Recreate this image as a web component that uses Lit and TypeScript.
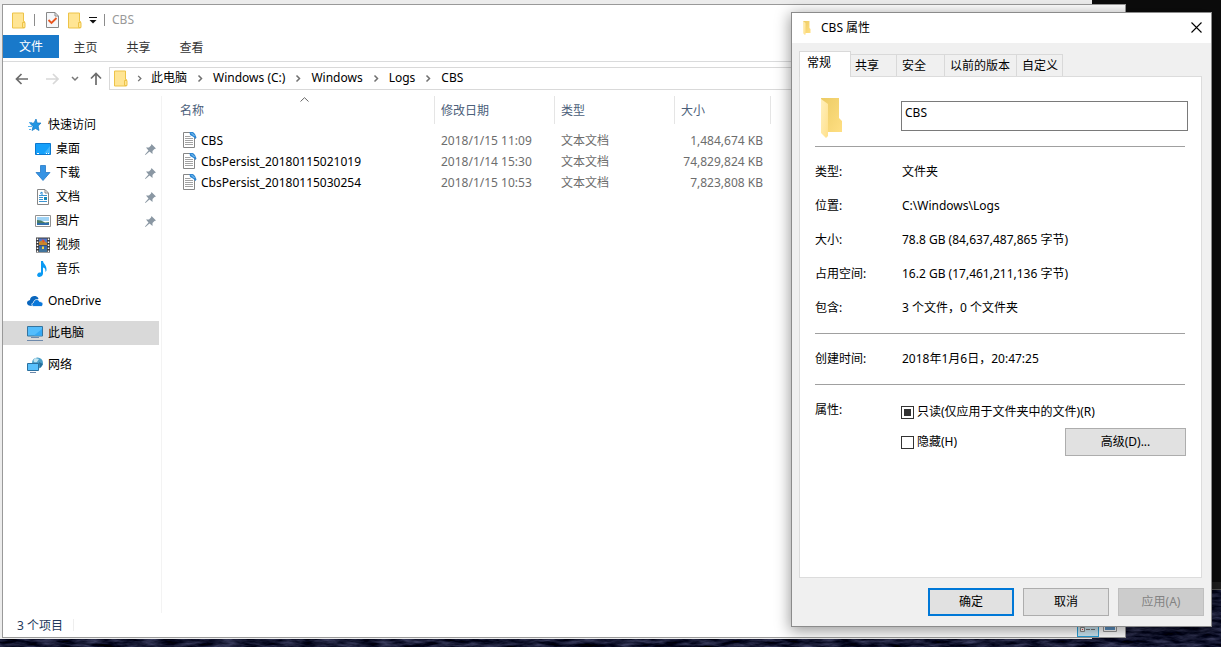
import { LitElement, html, css, svg } from "lit";
import { customElement, state } from "lit/decorators.js";

const smallFolder = html`<svg width="14" height="17" viewBox="0 0 14 17" aria-hidden="true">
  <path d="M.5 1H11.5V9.500H12.500V16H.5Z" fill="#ffe594" stroke="#edc348" />
  <path d="M10.500 15.500V10.500H13V15.500Z" fill="#ffe594" stroke="#edc348" />
</svg>`;

const bigFolder = (w: number, h: number) => html`<svg width=${w} height=${h} viewBox="0 0 22 40" aria-hidden="true">
  <defs>
    <linearGradient id="back" x1="0" x2="1" y2="1"><stop offset="0" stop-color="#eccb64" /><stop offset="1" stop-color="#ffdf83" /></linearGradient>
    <linearGradient id="front" y2="1"><stop offset="0" stop-color="#fff0bd" /><stop offset="1" stop-color="#ffe08b" /></linearGradient>
  </defs>
  <path d="M0 0H18V20L21 23V34H3Z" fill="url(#back)" />
  <path d="M0 1L7 6V38L5 40L0 35Z" fill="url(#front)" />
</svg>`;

const chevron = html`<svg class="chev" viewBox="0 0 26 9" aria-hidden="true">
  <path d="M11.500 1.500L14.500 4.500L11.500 7.500" fill="none" stroke="#707070" stroke-width="1.500" />
</svg>`;

const pin = html`<svg class="pin" width="11" height="11" viewBox="0 0 11 11" aria-hidden="true">
  <path d="M6.500 0L11 4.500L9.500 5L7.500 7L7.500 10L4.500 7.500L.5 11L0 10.500L3.500 6.500L1 3.500H4L6 1.500Z" fill="#8a97a3" />
</svg>`;

const textFile = html`<svg width="14" height="17" viewBox="0 0 14 17" aria-hidden="true">
  <path d="M.5 .5H9.500L11.500 4V15.500H.5Z" fill="#fff" stroke="#868686" />
  <path d="M2 4.500H7.500M2 6.500H10M2 8.500H10M2 10.500H10M2 12.500H10" stroke="#a2a2a2" />
  <path d="M6.500 0H10L12 2L13.500 5.500L12.500 7L10.500 5L7 3Z" fill="#2f88d4" />
  <path d="M8.500 1L11.500 4" stroke="#8fd0f8" />
</svg>`;

const icons: Record<string, unknown> = {
  star: svg`<path d="M9 2L10.200 6H14L11.200 9L12 13.500L8.500 11.500L5 13.500L6 9.500L3 6.500L7 6Z" fill="#2196e3" stroke="#1079c4" stroke-width=".7"/><path d="M2 5.500H5M1 9.500H5M2 12.500H4" stroke="#58b3ee"/>`,
  desktop: svg`<path d="M.5 2.500H15.500V13.500H.5Z" fill="#15a0fa" stroke="#0b78cf"/><path d="M9 12.500L15 5V12.500Z" fill="#41b5fc"/><path d="M2 12.500H4M11 12.500H12M13 12.500H14" stroke="#fff"/>`,
  download: svg`<path d="M5.500 .5H10.500V7.500H15L8 15.500L1 7.500H5.500Z" fill="#3593e4" stroke="#2579c6" stroke-width=".8"/>`,
  document: svg`<path d="M2.500 .5H10L13.500 4V15.500H2.500Z" fill="#fff" stroke="#868686"/><path d="M10 1V4H13" fill="none" stroke="#868686"/><path d="M4 6.500H12M4 8.500H8M4 10.500H8M4 12.500H12" stroke="#3b94d2"/><path d="M9 8H12V11H9Z" fill="#1687b9"/><path d="M5 4.500L7 3M7 3V6" stroke="#2189d8"/>`,
  picture: svg`<path d="M.5 2.500H15.500V13.500H.5Z" fill="#fff" stroke="#929292"/><path d="M2 4H14V8H2Z" fill="#9fd3f5"/><path d="M2 7L6 7.500L10 9.500L14 9V10H2Z" fill="#497b67"/><path d="M2 10H14V12H2Z" fill="#2e6dab"/>`,
  video: svg`<path d="M1 .5H15V15.500H1Z" fill="#3a3a3d"/><path d="M4 1.500H12V8H4Z" fill="#5377c9"/><path d="M4 8.500H12V15H4Z" fill="#3467b1"/><path d="M4 5L8 3L12 6V8H4Z" fill="#c9862c"/><path d="M7 2L10 4L8 6Z" fill="#e14e33"/><path d="M4 12L7 10L9 13L12 11V15H4Z" fill="#42749c"/><path d="M7 9.500H9V12H7Z" fill="#efd34d"/><path d="M2.500 1.500V15M13.500 1.500V15" stroke="#fff" stroke-width="1.500" stroke-dasharray="1.500 1.500"/>`,
  music: svg`<path d="M6 0H8C8.500 3.500 12 4 11.500 9.500L10.500 11C10.500 8 10 7 8 6.500V12.500C8 15 5.500 16 4 16C1.500 16 1.500 12 4.500 11.500L6 11.500Z" fill="#0b9af3"/>`,
  cloud: svg`<path d="M5 13C2 13 0 12 0 10C0 8 1.500 7.500 3 7C3 4 6 2.500 8.500 3C10 3.500 11 4.500 11.500 5.500" fill="#0a66bd"/><path d="M7 13.500C4.500 13.500 4 10.500 6.500 9.500C7 6 11.500 5.500 12.500 8.500C15 8.500 16 10 16 11C16 12.500 15 13.500 14 13.500Z" fill="#0a78da" stroke="#fff" stroke-width=".8"/>`,
  pc: svg`<path d="M.5 1.500H15.500V11H.5Z" fill="#54bdfc" stroke="#35749e"/><path d="M7 10.500L15 4V10.500Z" fill="#35a9f5"/><path d="M4 12.500H12M0 15.500H16" stroke="#6d89ab"/>`,
  network: svg`<circle cx="10.500" cy="6" r="5.500" fill="#4b9fc8"/><path d="M8 1C5 4 7 6 10 5L12 2Z" fill="#bfe4f1"/><path d="M12 5L16 7L13 11Z" fill="#266f9b"/><path d="M.5 6.500H11.500V13.500H.5Z" fill="#59c0fb" stroke="#2b709f"/><path d="M3 15.500H9" stroke="#6d89ab"/>`,
};

const icon = (name: string) => html`<svg class="ico" width="16" height="16" viewBox="0 0 16 16" aria-hidden="true">${icons[name]}</svg>`;

const sharedText = css`
  :host { box-sizing: border-box; font-family: "Noto Sans", "Noto Sans CJK SC", sans-serif; font-size: 12px; line-height: 16px; color: #000; }
  * { box-sizing: border-box; }
  svg { display: block; flex: none; }
  button, input { font: inherit; color: inherit; }
  button { padding: 0; }
  a { color: inherit; text-decoration: none; }
`;

@customElement("explorer-window")
class ExplorerWindow extends LitElement {
  static styles = [sharedText, css`
    :host { display: flex; flex-direction: column; background: #fff; border: 1px solid #999; }
    .title { display: flex; align-items: center; height: 30px; padding-left: 9px; color: #999; }
    .bar { width: 1px; height: 12px; background: #8c8c8c; }
    .title .bar:nth-of-type(1) { margin: 0 11px 0 8px; }
    .title .check { margin-right: 9px; }
    .title .more { margin: 0 7px; }
    .title .name { margin-left: 7px; }
    .ribbon { display: flex; height: 27px; border-bottom: 1px solid #dadbdc; }
    .ribbon button { height: 23px; border: 0; background: none; color: #333; width: 53px; padding-top: 2px; }
    .ribbon .file { width: 56px; background: #1979ca; color: #fff; padding-top: 0; }
    .address { display: flex; align-items: center; height: 34px; padding-bottom: 1px; }
    .nav { display: flex; align-items: center; width: 106px; flex: none; padding-left: 12px; }
    .nav button { border: 0; background: none; }
    .nav button:nth-child(2) { margin-left: 17px; }
    .nav button:nth-child(3) { margin-left: 12px; }
    .nav button:nth-child(4) { margin-left: 11px; }
    .path { flex: 1; display: flex; align-items: center; height: 23px; border: 1px solid #d9d9d9; padding-left: 4px; white-space: nowrap; }
    .path span { padding-bottom: 1px; }
    .chev { width: 26px; height: 9px; }
    .chev:nth-child(2) { width: 23px; }
    .body { flex: 1; display: flex; min-height: 0; }
    .tree { width: 159px; flex: none; padding-top: 17px; border-right: 1px solid #f3f3f3; }
    .tree a { display: flex; align-items: center; height: 24px; padding-left: 24px; margin-right: 2px; gap: 5px; }
    .tree a.sub { padding: 0 3px 0 32px; }
    .tree a.gap { margin-top: 8px; }
    .tree a.on { background: #d9d9d9; }
    .pin { margin-left: auto; }
    .list { flex: 1; }
    table { border-collapse: separate; border-spacing: 0; table-layout: fixed; width: 609px; }
    th { position: relative; height: 28px; padding: 2px 6px 0; text-align: left; font-weight: 400; color: #4c607a; border-right: 1px solid #e5e5e5; }
    th:first-child { padding-left: 18px; }
    th svg { position: absolute; left: 138px; top: 1px; }
    .c1 { width: 273px; } .c2 { width: 120px; } .c4 { width: 96px; }
    td { height: 21px; padding: 0 6px; color: #6d6d6d; white-space: nowrap; }
    td:first-child { color: #000; padding-left: 21px; }
    td:last-child { text-align: right; padding-right: 8px; }
    .file-name { display: flex; align-items: center; gap: 4px; }
    tbody::before { content: ""; display: block; height: 6px; }
    .status { display: flex; align-items: center; height: 24px; padding-left: 14px; color: #1e395b; flex: none; }
    .status span { padding-top: 1px; }
    .status i { width: 1px; height: 12px; margin-left: 10px; background: #eee; }
    .views { margin-left: auto; display: flex; height: 24px; }
    .views button { border: 0; background: none; width: 22px; display: grid; place-items: center; }
    .views .sel { border: 1px solid #26a0da; background: #cce8f4; }
    .views button:last-child { margin-right: 4px; }
  `];

  private files = [
    ["CBS", "2018/1/15 11:09", "1,484,674 KB"],
    ["CbsPersist_20180115021019", "2018/1/14 15:30", "74,829,824 KB"],
    ["CbsPersist_20180115030254", "2018/1/15 10:53", "7,823,808 KB"],
  ];

  private tree = [
    ["star", "快速访问", ""], ["desktop", "桌面", "sub pinned"], ["download", "下载", "sub pinned"],
    ["document", "文档", "sub pinned"], ["picture", "图片", "sub pinned"], ["video", "视频", "sub"],
    ["music", "音乐", "sub"], ["cloud", "OneDrive", "gap"], ["pc", "此电脑", "gap on"], ["network", "网络", "gap"],
  ];

  render() {
    const path = ["此电脑", "Windows (C:)", "Windows", "Logs", "CBS"];
    return html`
      <div class="title">
        ${smallFolder}<span class="bar"></span>
        <svg class="check" width="13" height="16" viewBox="0 0 13 16"><path d="M.5 .5H9L12.500 4V15.500H.5Z" fill="#f5f7fa" stroke="#888"/><path d="M9 .5V4H12" fill="none" stroke="#888"/><path d="M2.500 8L5.500 11L10.500 6" fill="none" stroke="#e8561f" stroke-width="1.800"/></svg>
        ${smallFolder}
        <svg class="more" width="8" height="8" viewBox="0 0 8 8"><path d="M0 1.500H8" stroke="#111"/><path d="M.5 4H7.500L4 7.500Z" fill="#111"/></svg>
        <span class="bar"></span><span class="name">CBS</span>
      </div>
      <div class="ribbon"><button class="file">文件</button><button>主页</button><button>共享</button><button>查看</button></div>
      <div class="address">
        <div class="nav">
          <button aria-label="后退"><svg width="14" height="12" viewBox="0 0 14 12"><path d="M13 6H1.500M6.500 1L1.500 6L6.500 11" fill="none" stroke="#6c6c6c" stroke-width="1.700"/></svg></button>
          <button aria-label="前进"><svg width="13" height="12" viewBox="0 0 13 12"><path d="M0 6H11.500M7 1L12 6L7 11" fill="none" stroke="#d8d8d8" stroke-width="1.700"/></svg></button>
          <button aria-label="最近位置"><svg width="8" height="6" viewBox="0 0 8 6"><path d="M1 1L4 4L7 1" fill="none" stroke="#777" stroke-width="1.500"/></svg></button>
          <button aria-label="上移"><svg width="12" height="13" viewBox="0 0 12 13"><path d="M6 13V1.500M1 6.500L6 1.500L11 6.500" fill="none" stroke="#6c6c6c" stroke-width="1.700"/></svg></button>
        </div>
        <div class="path">${smallFolder}${path.map((p) => html`${chevron}<span>${p}</span>`)}</div>
      </div>
      <div class="body">
        <nav class="tree">
          ${this.tree.map(([name, label, cls]) => html`<a href="#" class=${cls}>${icon(name)}<span>${label}</span>${cls.includes("pinned") ? pin : ""}</a>`)}
        </nav>
        <div class="list">
          <table>
            <thead><tr>
              <th class="c1">名称<svg width="9" height="5" viewBox="0 0 9 5"><path d="M.5 4.500L4.500 .7L8.500 4.500" fill="none" stroke="#666"/></svg></th>
              <th class="c2">修改日期</th><th class="c2">类型</th><th class="c4">大小</th>
            </tr></thead>
            <tbody>
              ${this.files.map(([n, d, s]) => html`<tr><td><div class="file-name">${textFile}<span>${n}</span></div></td><td>${d}</td><td>文本文档</td><td>${s}</td></tr>`)}
            </tbody>
          </table>
        </div>
      </div>
      <div class="status"><span>3 个项目</span><i></i>
        <div class="views">
          <button class="sel" aria-label="详细信息"><svg width="16" height="18" viewBox="0 0 16 18"><path d="M.5 1.500H3.500V5.500H.5ZM.5 11.500H4.500V15.500H.5Z" fill="#fff" stroke="#888"/><path d="M2 13.500H3" stroke="#d33"/><path d="M6 3.500H10M11 3.500H15M6 13.500H10M11 13.500H15" stroke="#777"/></svg></button>
          <button aria-label="大图标"><svg width="14" height="14" viewBox="0 0 14 14"><path d="M.5 .5H13.500V13.500H.5Z" fill="#fff" stroke="#999"/><path d="M2 8H12V12H2Z" fill="#5a8fc0"/></svg></button>
        </div>
      </div>`;
  }
}

@customElement("properties-dialog")
class PropertiesDialog extends LitElement {
  @state() private hiddenAttr = false;

  static styles = [sharedText, css`
    :host { display: flex; flex-direction: column; background: #f0f0f0; border: 1px solid #8b8b8b; box-shadow: 0 3px 14px 1px rgba(0, 0, 0, 0.4); }
    header { display: flex; align-items: center; height: 30px; padding: 0 9px 1px 10px; background: #fff; }
    header span { margin-left: 9px; }
    .close { margin-left: auto; border: 0; background: none; }
    .tabs { display: flex; align-items: flex-end; height: 33px; margin: 0 7px; }
    .tabs button { height: 22px; border: 1px solid #d9d9d9; border-left: 0; border-bottom: 0; background: #f0f0f0; text-align: left; padding: 1px 0 0 5px; white-space: nowrap; }
    .tabs .active { position: relative; width: 52px; height: 26px; margin-bottom: -1px; border-left: 1px solid #d9d9d9; background: #fff; padding: 0 0 3px 7px; }
    .tabs .t2 { width: 46px; padding-left: 4px; } .t3 { width: 48px; } .t4 { width: 72px; } .t5 { width: 46px; }
    .panel { flex: 1; margin: 0 9px 0 7px; border: 1px solid #dcdcdc; background: #fff; padding: 0 13px 0 15px; }
    .head { display: flex; align-items: center; height: 69px; padding-left: 6px; }
    .head svg { margin-top: 13px; }
    .head input { flex: 1; min-width: 0; height: 30px; margin: 8px 0 0 58px; padding: 0 3px 6px; border: 1px solid #7a7a7a; border-radius: 0; background: #fff; outline: 0; }
    hr { height: 1px; margin: 0 3px 0 0; border: 0; background: #a0a0a0; }
    dl { margin: 0; display: grid; grid-template-columns: 87px 1fr; align-items: center; }
    dt, dd { margin: 0; }
    .facts { grid-auto-rows: 34px; padding: 8px 0; }
    .created { grid-auto-rows: 50px; }
    .attrs { display: grid; grid-template-columns: 86px 1fr; padding-top: 12px; }
    .attrs > span { padding-top: 5px; }
    .line { display: flex; align-items: center; height: 30px; white-space: nowrap; }
    label { display: flex; align-items: center; gap: 3px; }
    input[type="checkbox"] { appearance: none; width: 13px; height: 13px; margin: 0; border: 1px solid #333; background: #fff; flex: none; display: grid; place-items: center; }
    input[type="checkbox"]:indeterminate::before { content: ""; width: 7px; height: 7px; background: #333; }
    input[type="checkbox"]:checked::before { content: ""; width: 7px; height: 4px; border: solid #333; border-width: 0 0 2px 2px; rotate: -45deg; }
    .push { height: 28px; width: 86px; border: 1px solid #adadad; background: #e1e1e1; }
    .advanced { width: 121px; margin: 0 2px 0 auto; }
    .push.default { border: 2px solid #0078d7; }
    .push:disabled { border-color: #bfbfbf; background: #ccc; color: #838383; }
    footer { display: flex; justify-content: flex-end; gap: 9px; padding: 10px 7px; }
  `];

  render() {
    return html`
      <header>${bigFolder(10, 14)}<span>CBS 属性</span>
        <button class="close" aria-label="关闭"><svg width="11" height="11" viewBox="0 0 11 11"><path d="M.5 .5L10.500 10.500M10.500 .5L.5 10.500" stroke="#000" stroke-width="1.100"/></svg></button>
      </header>
      <div class="tabs"><button class="active">常规</button><button class="t2">共享</button><button class="t3">安全</button><button class="t4">以前的版本</button><button class="t5">自定义</button></div>
      <div class="panel">
        <div class="head">${bigFolder(22, 40)}<input aria-label="名称" .value=${"CBS"} /></div>
        <hr />
        <dl class="facts">
          <dt>类型:</dt><dd>文件夹</dd>
          <dt>位置:</dt><dd>C:\\Windows\\Logs</dd>
          <dt>大小:</dt><dd>78.8 GB (84,637,487,865 字节)</dd>
          <dt>占用空间:</dt><dd>16.2 GB (17,461,211,136 字节)</dd>
          <dt>包含:</dt><dd>3 个文件，0 个文件夹</dd>
        </dl>
        <hr />
        <dl class="created"><dt>创建时间:</dt><dd>2018年1月6日，20:47:25</dd></dl>
        <hr />
        <div class="attrs"><span>属性:</span>
          <div>
            <div class="line"><label><input type="checkbox" .indeterminate=${true} />只读(仅应用于文件夹中的文件)(R)</label></div>
            <div class="line"><label><input type="checkbox" .checked=${this.hiddenAttr} @change=${() => (this.hiddenAttr = !this.hiddenAttr)} />隐藏(H)</label><button class="push advanced">高级(D)...</button></div>
          </div>
        </div>
      </div>
      <footer><button class="push default">确定</button><button class="push">取消</button><button class="push" disabled>应用(A)</button></footer>`;
  }
}

@customElement("app-root")
class AppRoot extends LitElement {
  static styles = css`
    :host { display: block; position: relative; height: 100vh; overflow: hidden; background: #10142c; }
    .wallpaper { position: absolute; inset: 0; width: 100%; height: 100%; }
    .console { position: absolute; inset: 0 0 57px 0; background: #0c0c0c; border-bottom: 1px solid #555; }
    .console::after { content: ""; position: absolute; inset: auto 0 0 0; height: 7px; background: #1f1f1f; }
    .behind { position: absolute; inset: 0 129px 8px 0; background: #ececec; }
    .explorer { position: absolute; inset: 4px 95px 9px 2px; }
    .dialog { position: absolute; top: 12px; right: 9px; bottom: 20px; width: 421px; }
  `;

  render() {
    return html`
      <svg class="wallpaper" aria-hidden="true">
        <filter id="rock" x="0" y="0" width="100%" height="100%" color-interpolation-filters="sRGB">
          <feTurbulence type="fractalNoise" baseFrequency="0.05 0.25" numOctaves="4" seed="7" />
          <feColorMatrix values="0.5 0 0 0 -0.17  0.5 0 0 0 -0.16  0.6 0 0 0 -0.11  0 0 0 0 1" />
        </filter>
        <rect width="100%" height="100%" filter="url(#rock)" />
      </svg>
      <div class="console"></div>
      <div class="behind"></div>
      <explorer-window class="explorer"></explorer-window>
      <properties-dialog class="dialog"></properties-dialog>`;
  }
}
